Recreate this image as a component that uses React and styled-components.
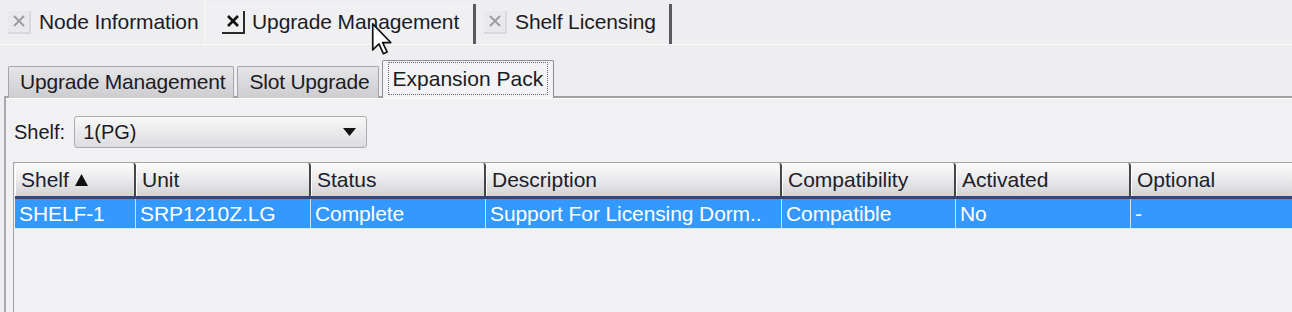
import React from "react";
import styled, { createGlobalStyle } from "styled-components";

const Global = createGlobalStyle`
  html, body {
    margin: 0;
    padding: 0;
    background: #eeedf0;
    overflow: hidden;
  }
  body {
    font-family: "Liberation Sans", Arial, sans-serif;
  }
`;

const Frame = styled.div`
  position: relative;
  width: 1292px;
  height: 312px;
  overflow: hidden;
  background: #eeedf0;
  color: #1b1b24;
  font-size: 21px;
`;

/* ---------- top tab strip ---------- */

const TopTabs = styled.div`
  display: flex;
  height: 44px;
  border-bottom: 1px solid #fafafb;
`;

const TopTab = styled.div`
  display: flex;
  align-items: center;
  gap: ${(p) => p.$gap}px;
  width: ${(p) => p.$width}px;
  box-sizing: border-box;
  padding-left: ${(p) => p.$pad}px;
  background: ${(p) => (p.$active ? "#f0eff2" : "transparent")};
  border-right: ${(p) => (p.$divider ? "3px solid #5a5a5e" : "1px solid #f7f7f8")};
  margin: ${(p) => (p.$divider ? "4px 0 0" : "0")};
  padding-bottom: ${(p) => (p.$divider ? "4px" : "0")};
  white-space: nowrap;
  letter-spacing: -0.1px;
`;

const CloseBox = styled.span`
  display: inline-flex;
  width: 23px;
  height: 23px;
  box-sizing: border-box;
  align-items: center;
  justify-content: center;
  border-right: 2px solid ${(p) => (p.$active ? "#2a2a2a" : "#d9d9db")};
  border-bottom: 2px solid ${(p) => (p.$active ? "#2a2a2a" : "#d9d9db")};
  background: ${(p) => (p.$active ? "transparent" : "#e9e8eb")};
`;

const CloseIcon = ({ active }) => (
  <CloseBox $active={active}>
    <svg width="14" height="14" viewBox="0 0 14 14">
      <path
        d="M2 2 L12 12 M12 2 L2 12"
        stroke={active ? "#111" : "#9c9ca0"}
        strokeWidth={active ? 2.6 : 1.8}
        fill="none"
      />
    </svg>
  </CloseBox>
);

/* ---------- sub tabs ---------- */

const Body = styled.div`
  padding-left: 4px;
`;

const SubTabs = styled.div`
  display: flex;
  align-items: flex-end;
  gap: 3px;
  height: 53px;
  padding-left: 4px;
  margin-bottom: -2px;
  position: relative;
  z-index: 1;
`;

const SubTab = styled.div`
  display: flex;
  align-items: center;
  box-sizing: border-box;
  height: ${(p) => (p.$active ? 38 : 32)}px;
  padding: ${(p) => (p.$active ? "0 5px" : "0 8px 2px 11px")};
  border: 1px solid ${(p) => (p.$active ? "#8e8e92" : "#a6a6a9")};
  border-bottom: none;
  border-radius: 2px 2px 0 0;
  background: ${(p) =>
    p.$active ? "#f3f2f5" : "linear-gradient(#e6e6e8, #cdcdd0)"};
  white-space: nowrap;
  letter-spacing: ${(p) => (p.$active ? "0" : "-0.2px")};
`;

const Focus = styled.span`
  display: flex;
  align-items: center;
  height: 31px;
  margin-bottom: 2px;
  padding: 0 4px;
  border: 1px dotted #6c6c70;
`;

/* ---------- panel ---------- */

const Panel = styled.div`
  height: 230px;
  background: #f1f0f3;
  border-top: 2px solid #a1a1a4;
  border-left: 2px solid #a9a9ac;
  box-shadow: inset 0 1px 0 #ffffff;
  padding-left: 8px;
`;

const ShelfRow = styled.div`
  display: flex;
  align-items: center;
  gap: 9px;
  padding-top: 18px;
  font-size: 20px;
`;

const Combo = styled.div`
  display: flex;
  align-items: center;
  justify-content: space-between;
  width: 293px;
  height: 32px;
  box-sizing: border-box;
  padding: 0 10px 0 8px;
  border: 1px solid #acacaf;
  border-radius: 3px;
  background: linear-gradient(#f8f8f9, #dcdcdf);
`;

const Table = styled.div`
  margin: 14px 0 0 -1px;
  width: 1400px;
  border-top: 1px solid #a5a5a8;
  border-left: 1px solid #a5a5a8;
  height: 200px;
  padding-left: 1px;
`;

const cols = "121px 175px 175px 296px 174px 175px 284px";

const HeaderRow = styled.div`
  display: grid;
  grid-template-columns: ${cols};
  height: 33px;
  border-bottom: 3px solid #3d4270;
`;

const HeadCell = styled.div`
  display: flex;
  align-items: center;
  gap: 6px;
  padding-left: 5px;
  border-radius: 3px 3px 0 0;
  border-left: 1px solid #ffffff;
  border-right: 2px solid #45454a;
  background: linear-gradient(#fbfbfb, #ececee 45%, #d3d3d6);
  color: #202028;
  white-space: nowrap;
`;

const DataRow = styled.div`
  display: grid;
  grid-template-columns: ${cols};
  height: 29px;
  background: #3399ff;
  border-bottom: 1px solid #d6ebff;
`;

const Cell = styled.div`
  display: flex;
  align-items: center;
  padding-left: 4px;
  color: #ffffff;
  border-right: 1px solid #c7e2ff;
  white-space: nowrap;
  overflow: hidden;
  letter-spacing: -0.1px;
`;

const Cursor = styled.svg`
  position: absolute;
  left: 370px;
  top: 23px;
`;

const columns = [
  "Shelf",
  "Unit",
  "Status",
  "Description",
  "Compatibility",
  "Activated",
  "Optional",
];

const row = [
  "SHELF-1",
  "SRP1210Z.LG",
  "Complete",
  "Support For Licensing Dorm..",
  "Compatible",
  "No",
  "-",
];

export default function App() {
  return (
    <Frame>
      <Global />
      <TopTabs>
        <TopTab $width={205} $pad={8} $gap={8}>
          <CloseIcon />
          Node Information
        </TopTab>
        <TopTab $width={271} $pad={17} $gap={7} $active $divider>
          <CloseIcon active />
          Upgrade Management
        </TopTab>
        <TopTab $width={196} $pad={8} $gap={8} $divider>
          <CloseIcon />
          Shelf Licensing
        </TopTab>
      </TopTabs>

      <Body>
        <SubTabs>
          <SubTab>Upgrade Management</SubTab>
          <SubTab>Slot Upgrade</SubTab>
          <SubTab $active>
            <Focus>Expansion Pack</Focus>
          </SubTab>
        </SubTabs>
        <Panel>
          <ShelfRow>
            Shelf:
            <Combo>
              <span>1(PG)</span>
              <svg width="13" height="8" viewBox="0 0 13 8">
                <path d="M0 0 L13 0 L6.5 8 Z" fill="#111" />
              </svg>
            </Combo>
          </ShelfRow>
          <Table>
            <HeaderRow>
              {columns.map((c, i) => (
                <HeadCell key={c}>
                  {c}
                  {i === 0 && (
                    <svg width="13" height="12" viewBox="0 0 13 12">
                      <path d="M6.5 0 L13 12 L0 12 Z" fill="#111" />
                    </svg>
                  )}
                </HeadCell>
              ))}
            </HeaderRow>
            <DataRow>
              {row.map((v, i) => (
                <Cell key={i}>{v}</Cell>
              ))}
            </DataRow>
          </Table>
        </Panel>
      </Body>

      <Cursor width="24" height="32" viewBox="0 0 12 19">
        <path
          d="M0.5 0.5 L0.5 16 L4.2 12.4 L6.8 18.2 L9 17.2 L6.4 11.6 L11.2 11.6 Z"
          fill="#ffffff"
          stroke="#111"
          strokeWidth="1"
          strokeLinejoin="round"
        />
      </Cursor>
    </Frame>
  );
}
